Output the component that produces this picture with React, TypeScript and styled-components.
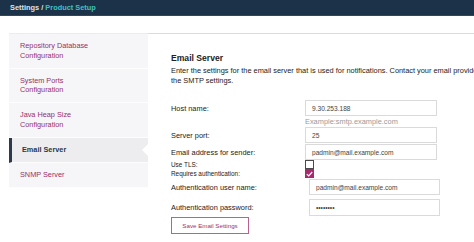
import styled, { createGlobalStyle } from "styled-components";

const GlobalStyle = createGlobalStyle`
  html, body {
    margin: 0;
    padding: 0;
    background: #fff;
    width: 474px;
    height: 242px;
    overflow: hidden;
  }
  body {
    font-family: "Liberation Sans", Arial, sans-serif;
    -webkit-font-smoothing: antialiased;
  }
`;

const navItems = [
  { label: "Repository Database\nConfiguration" },
  { label: "System Ports\nConfiguration" },
  { label: "Java Heap Size\nConfiguration" },
  { label: "Email Server", active: true },
  { label: "SNMP Server" },
];

const CheckMark = () => (
  <svg width="7" height="6" viewBox="0 0 7 6">
    <path d="M0.8 3.1 L2.7 4.9 L6.2 1" fill="none" stroke="#fff" strokeWidth="1.2" />
  </svg>
);

export const App = () => {
  return (
    <>
      <GlobalStyle />
      <Header>
        <Crumb>Settings / </Crumb>
        <CrumbCurrent>Product Setup</CrumbCurrent>
      </Header>
      <Page>
        <SideBar>
          {navItems.map((item) => (
            <NavItem key={item.label} $active={!!item.active}>
              {item.label}
            </NavItem>
          ))}
        </SideBar>
        <Main>
          <Title>Email Server</Title>
          <Description>
            Enter the settings for the email server that is used for notifications. Contact your email provider for
            <br />
            the SMTP settings.
          </Description>
          <Form>
            <Row $h={16}>
              <Label>Host name:</Label>
              <Field readOnly value="9.30.253.188" />
            </Row>
            <Row $h={10}>
              <span />
              <Hint>Example:smtp.example.com</Hint>
            </Row>
            <Row $h={16} $mt={1}>
              <Label>Server port:</Label>
              <Field readOnly value="25" />
            </Row>
            <Row $h={16} $mt={1}>
              <Label>Email address for sender:</Label>
              <Field readOnly value="padmin@mail.example.com" />
            </Row>
            <Row $h={9}>
              <Label $small>Use TLS:</Label>
              <Check $checked={false} />
            </Row>
            <Row $h={9}>
              <Label $small>Requires authentication:</Label>
              <Check $checked>
                <CheckMark />
              </Check>
            </Row>
            <Row $h={16} $mt={1}>
              <Label>Authentication user name:</Label>
              <Field $indent readOnly value="padmin@mail.example.com" />
            </Row>
            <Row $h={17} $mt={4}>
              <Label>Authentication password:</Label>
              <Field $indent readOnly type="password" value="********" />
            </Row>
            <SaveButton>Save Email Settings</SaveButton>
          </Form>
        </Main>
      </Page>
    </>
  );
};

const Header = styled.div`
  height: 15px;
  background: #1c3248;
  display: flex;
  align-items: center;
  padding-left: 10px;
  font-size: 7.4px;
  font-weight: 700;
  box-shadow: 0 1px 0 #2c4760;
`;

const Crumb = styled.span`
  color: #dde2e7;
  white-space: pre;
`;

const CrumbCurrent = styled.span`
  color: #3ec2c0;
`;

const Page = styled.div`
  display: flex;
  padding: 18px 0 0 9px;
`;

const SideBar = styled.div`
  width: 139px;
  flex-shrink: 0;
  align-self: flex-start;
  background: #f6f6f8;
  border-top: 1px solid #ececee;
`;

const NavItem = styled.div<{ $active: boolean }>`
  position: relative;
  white-space: pre-line;
  font-size: 7.3px;
  line-height: 9.5px;
  padding: 7px 10px 7.5px ${(p) => (p.$active ? "10px" : "11px")};
  color: ${(p) => (p.$active ? "#2b3845" : "#97306c")};
  font-weight: ${(p) => (p.$active ? 700 : 400)};
  background: ${(p) => (p.$active ? "#ededef" : "transparent")};
  border-left: ${(p) => (p.$active ? "3px solid #2e3a47" : "0")};
  border-bottom: 1px solid #fdfdfd;

  &::after {
    content: "";
    display: ${(p) => (p.$active ? "block" : "none")};
    position: absolute;
    right: 0;
    top: 50%;
    margin-top: -6px;
    border-top: 6px solid transparent;
    border-bottom: 6px solid transparent;
    border-right: 6px solid #fff;
  }
`;

const Main = styled.div`
  flex: 1;
  min-width: 0;
  border-top: 1px solid #dcdcdc;
  padding: 19px 0 0 23px;
  color: #1f1f1f;
`;

const Title = styled.div`
  font-size: 8.6px;
  line-height: 10px;
  font-weight: 700;
  color: #222;
`;

const Description = styled.div`
  margin-top: 3px;
  font-size: 7.4px;
  line-height: 9.5px;
  white-space: nowrap;
  color: #222;
`;

const Form = styled.div`
  margin-top: 15px;
  display: flex;
  flex-direction: column;
`;

const Row = styled.div<{ $h: number; $mt?: number }>`
  display: grid;
  grid-template-columns: 134px 136px;
  align-items: center;
  height: ${(p) => p.$h}px;
  margin-top: ${(p) => p.$mt ?? 0}px;
`;

const Label = styled.span<{ $small?: boolean }>`
  font-size: ${(p) => (p.$small ? "6.4px" : "7.4px")};
  color: #222;
  white-space: nowrap;
`;

const Field = styled.input<{ $indent?: boolean }>`
  box-sizing: border-box;
  height: 100%;
  width: ${(p) => (p.$indent ? "131px" : "132px")};
  margin: 0 0 0 ${(p) => (p.$indent ? "4px" : "0")};
  padding: 0 0 0 6px;
  border: 1px solid #dadada;
  background: #fff;
  font-family: "Liberation Sans", Arial, sans-serif;
  font-size: 6.6px;
  color: #444;
  outline: none;
`;

const Hint = styled.span`
  font-size: 7.4px;
  color: #999;
  white-space: nowrap;
  line-height: 9px;
`;

const Check = styled.span<{ $checked: boolean }>`
  box-sizing: border-box;
  width: 9px;
  height: 9px;
  display: flex;
  align-items: center;
  justify-content: center;
  border: 1px solid ${(p) => (p.$checked ? "#a8296d" : "#4a4a4a")};
  background: ${(p) => (p.$checked ? "#a8296d" : "#fff")};
`;

const SaveButton = styled.button`
  margin-top: 1px;
  width: 78px;
  height: 17px;
  padding: 0;
  border: 1px solid #b9628f;
  background: #fff;
  color: #a0306d;
  font-family: "Liberation Sans", Arial, sans-serif;
  font-size: 6.2px;
`;

export default App;
